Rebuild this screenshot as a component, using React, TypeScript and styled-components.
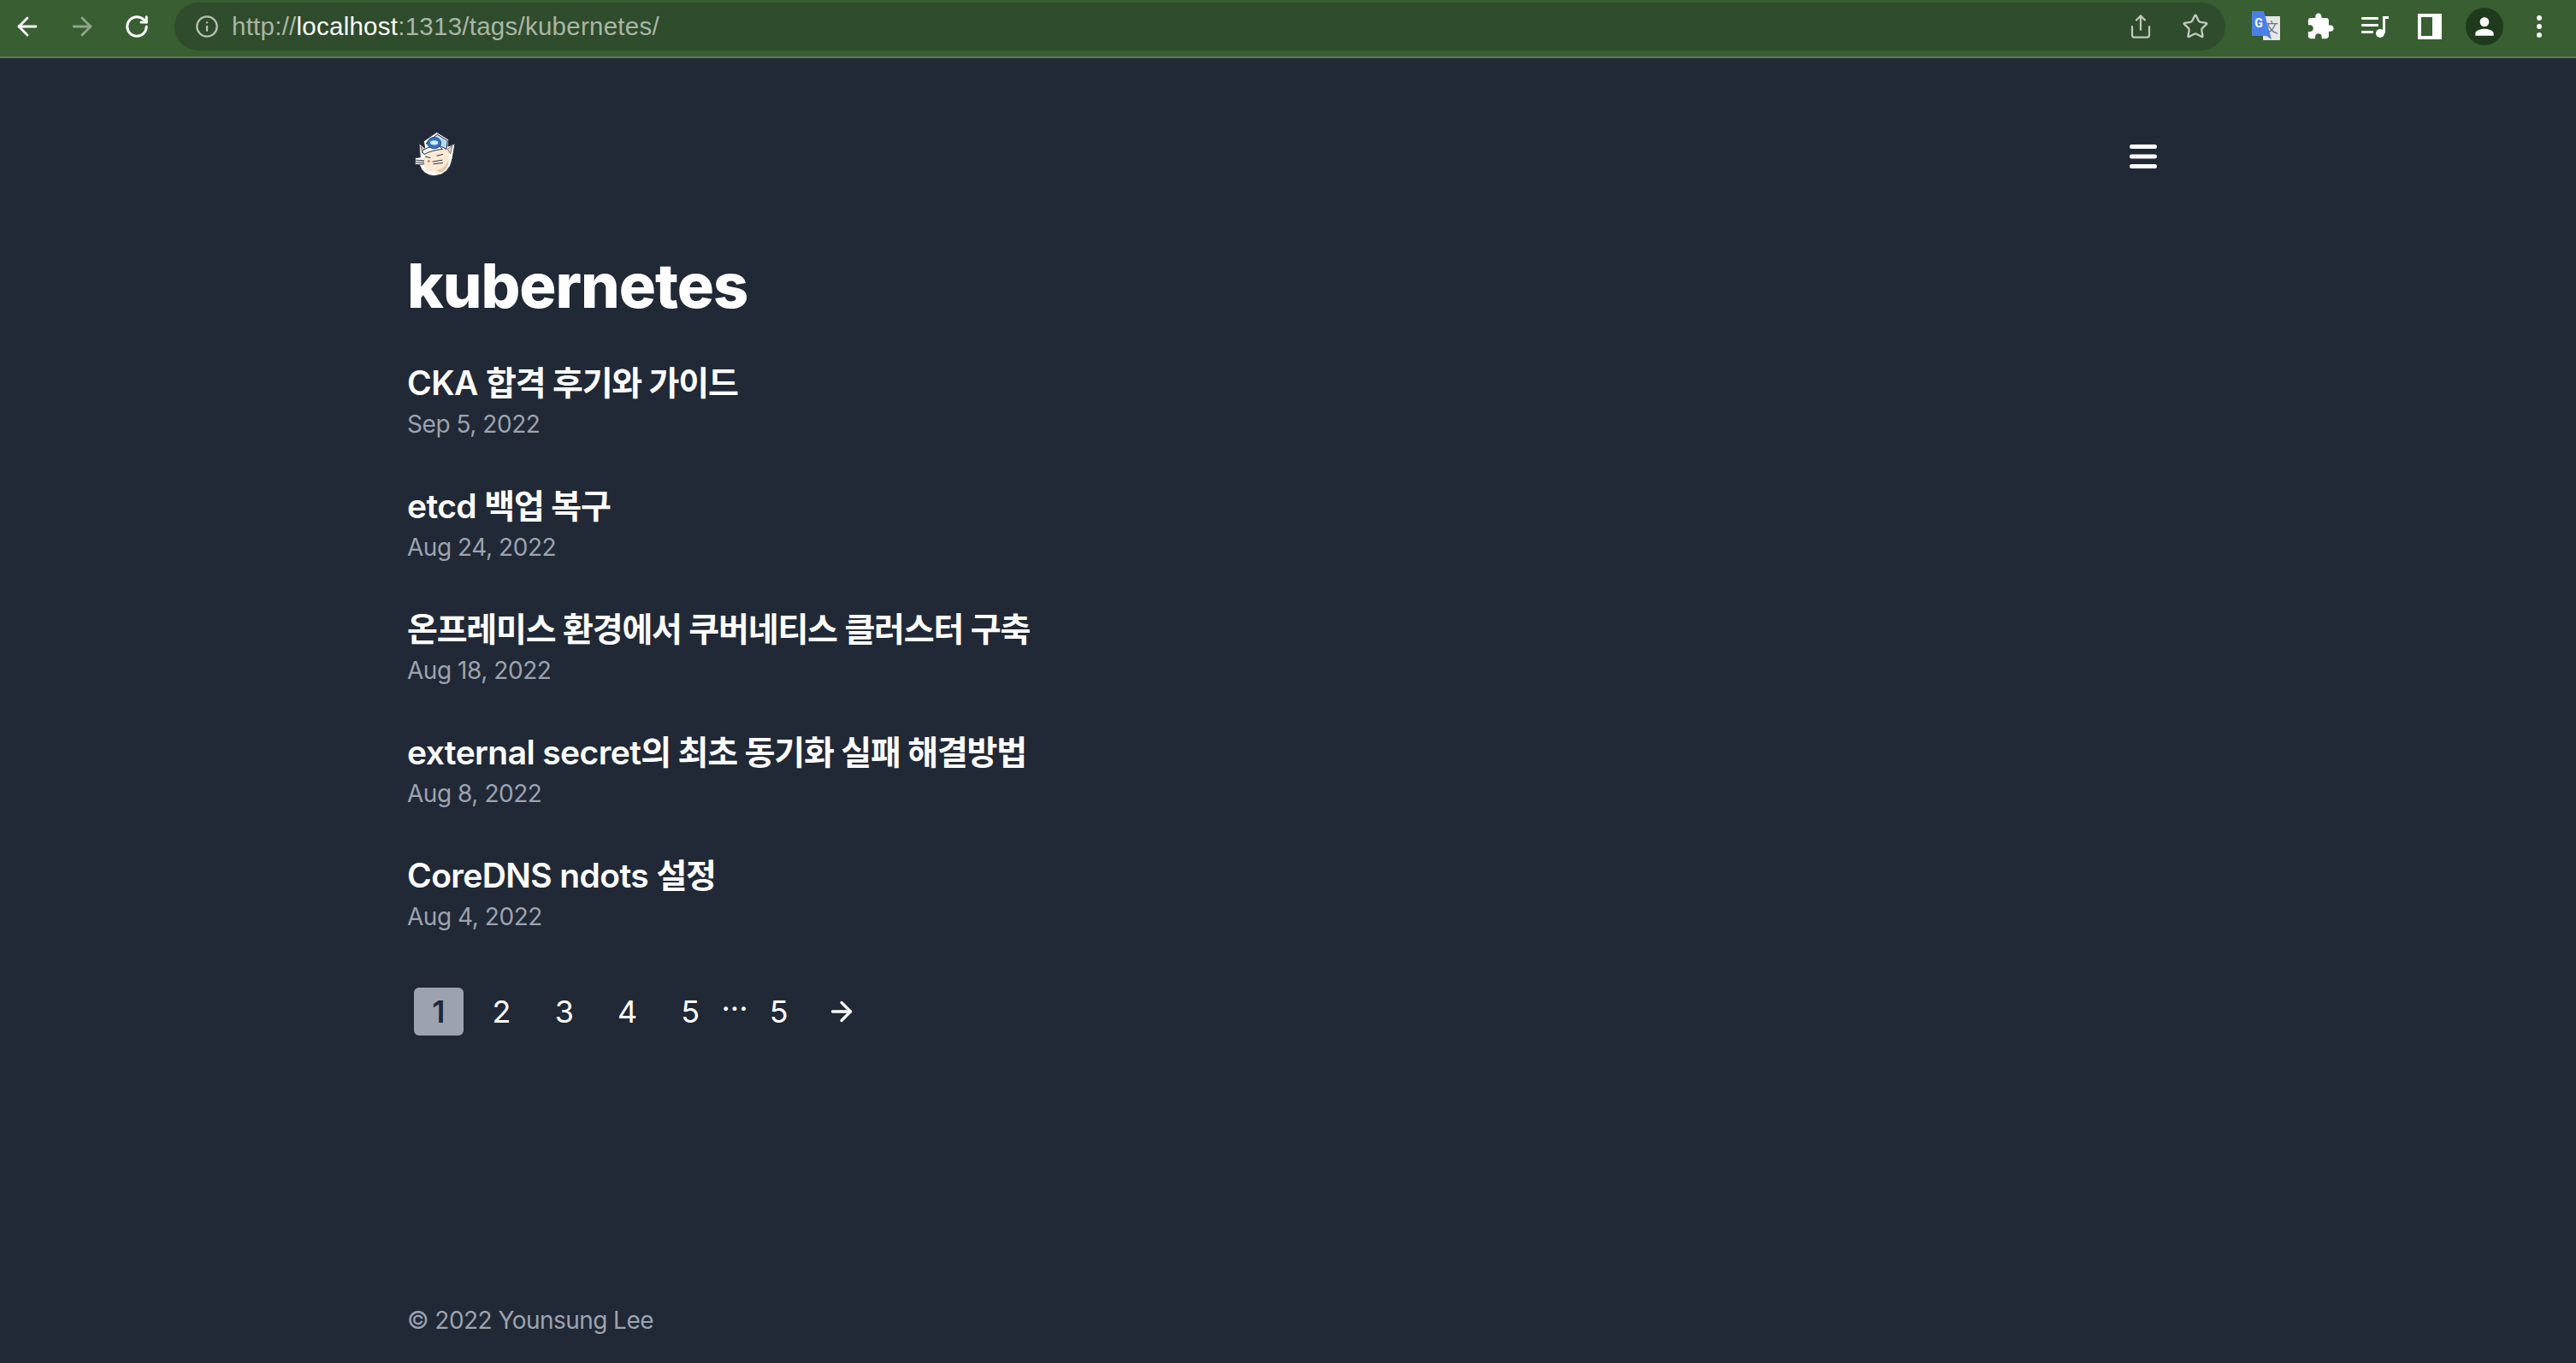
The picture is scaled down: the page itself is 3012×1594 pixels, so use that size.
import React from "react";
import styled, { createGlobalStyle } from "styled-components";
import { ArrowLeft, ArrowRight, RotateCw, Info, Share, Star } from "lucide-react";

const Global = createGlobalStyle`
  html, body { margin: 0; padding: 0; background: #212936; }
  body { font-family: Inter, "Noto Sans CJK KR", sans-serif; -webkit-font-smoothing: antialiased; }
  * { box-sizing: border-box; }
`;

const Page = styled.div`
  display: flex;
  flex-direction: column;
  height: 1594px;
  overflow: hidden;
  background: #212936;
  color: #fff;
`;

const Toolbar = styled.header`
  display: flex;
  align-items: center;
  flex: none;
  height: 68px;
  padding: 0 11px 4px 0;
  background: #385e31;
  border-bottom: 2px solid #5b7c55;
`;

const Slot = styled.div<{ $dim?: boolean }>`
  display: flex;
  align-items: center;
  justify-content: center;
  flex: none;
  width: 64px;
  height: 56px;
  color: ${(p) => (p.$dim ? "#8fa58b" : "#ffffff")};
`;

const Omnibox = styled.div`
  display: flex;
  align-items: center;
  flex: 1;
  height: 56px;
  margin: 0 15px 0 12px;
  padding: 0 3px 0 24px;
  border-radius: 28px;
  background: #2f4c2c;
`;

const InfoSlot = styled.span`
  display: flex;
  width: 43px;
  color: #b6bfb3;
`;

const Url = styled.div`
  flex: 1;
  font-family: "Liberation Sans", Arial, sans-serif;
  font-size: 29.5px;
  letter-spacing: 0.25px;
  color: #a9b6a6;
  b { font-weight: 400; color: #fff; }
`;

const PillIcon = styled(Slot)`
  color: #c1c8be;
`;

const AvatarCircle = styled.div`
  display: flex;
  align-items: center;
  justify-content: center;
  width: 44px;
  height: 44px;
  border-radius: 50%;
  background: #1f3a1c;
`;

const Main = styled.div`
  display: flex;
  flex-direction: column;
  flex: 1;
  width: 2060px;
  margin: 0 auto;
`;

const Nav = styled.nav`
  display: flex;
  align-items: center;
  justify-content: space-between;
  flex: none;
  height: 90px;
  margin-top: 70px;
  padding: 0 14px 0 8px;
`;

const LogoLink = styled.a`
  display: flex;
  margin-bottom: 6px;
`;

const Title = styled.h1`
  margin: 66px 0 0;
  font-size: 72px;
  line-height: 80px;
  font-weight: 800;
  letter-spacing: -1px;
`;

const List = styled.ul`
  display: flex;
  flex-direction: column;
  gap: 48px;
  margin: 46px 0 0;
  padding: 0;
  list-style: none;
`;

const Item = styled.li`
  display: flex;
  flex-direction: column;
  height: 96px;
`;

const ItemTitle = styled.a`
  font-size: 39px;
  line-height: 56px;
  font-weight: 600;
  letter-spacing: -1.2px;
  color: #fff;
`;

const Latin = styled.span`
  letter-spacing: -0.6px;
`;

const ItemDate = styled.time`
  font-size: 28px;
  line-height: 40px;
  letter-spacing: -0.45px;
  color: #9ca3af;
`;

const Pager = styled.div`
  display: flex;
  align-items: center;
  margin-top: 63px;
`;

const PageLink = styled.a<{ $active?: boolean }>`
  display: flex;
  align-items: center;
  justify-content: center;
  width: 57.6px;
  height: 56px;
  margin: 0 8px;
  border-radius: 6px;
  font-size: 36px;
  font-weight: ${(p) => (p.$active ? 600 : 400)};
  color: ${(p) => (p.$active ? "#1f2937" : "#fff")};
  background: ${(p) => (p.$active ? "#9ca3af" : "transparent")};
`;

const Dots = styled.span`
  display: flex;
  justify-content: center;
  width: 30px;
  white-space: nowrap;
  font-size: 36px;
  line-height: 48px;
  margin-top: -8px;
`;

const Footer = styled.footer`
  margin-top: auto;
  padding-bottom: 30px;
  font-size: 28px;
  line-height: 40px;
  letter-spacing: -0.55px;
  color: #9ca3af;
`;

const posts: [string, string, string][] = [
  ["CKA ", "합격 후기와 가이드", "Sep 5, 2022"],
  ["etcd ", "백업 복구", "Aug 24, 2022"],
  ["", "온프레미스 환경에서 쿠버네티스 클러스터 구축", "Aug 18, 2022"],
  ["external secret", "의 최초 동기화 실패 해결방법", "Aug 8, 2022"],
  ["CoreDNS ndots ", "설정", "Aug 4, 2022"],
];

const Logo = () => (
  <svg width="50" height="57" viewBox="70 65 150 170">
    <path d="M88 112 L108 128 L104 104 L150 72 L192 98 L190 122 L214 112 L205 165 Q195 222 140 226 Q100 222 90 188 L74 186 L74 162 L92 160 Z" fill="#fff" stroke="#2a2f3a" strokeWidth="3" strokeLinejoin="round" />
    <path d="M112 146 Q150 120 188 130 Q204 170 180 200 Q150 226 115 205 Q92 175 112 146Z" fill="#f9e9d5" />
    <path d="M150 205 Q175 205 192 170 Q190 205 160 215Z" fill="#eec39a" />
    <path d="M94 122 L108 136 L100 146Z" fill="#f3d8bd" stroke="#333" strokeWidth="2" />
    <path d="M205 118 L188 132 L198 148Z" fill="#f3d8bd" stroke="#333" strokeWidth="2" />
    <path d="M112 112 L152 80 L188 102 L184 132 L165 122Z" fill="#b9d9f2" stroke="#25304a" strokeWidth="3" strokeLinejoin="round" />
    <path d="M98 138 Q125 118 160 122 L170 132 Q130 136 106 150Z" fill="#fff" stroke="#25304a" strokeWidth="3" strokeLinejoin="round" />
    <ellipse cx="141" cy="110" rx="24" ry="20" fill="#2f74c8" stroke="#1f2c4c" strokeWidth="2" />
    <ellipse cx="141" cy="109" rx="14" ry="8" fill="#dbe9f7" />
    <path d="M76 170 L106 172 M76 178 L106 178 M78 186 L106 184" stroke="#30323a" strokeWidth="3" />
    <path d="M135 176 L170 170 M138 184 L172 180" stroke="#30323a" strokeWidth="3" />
    <path d="M110 158 L128 162 M150 155 L172 150" stroke="#30323a" strokeWidth="3" />
    <circle cx="122" cy="174" r="4" fill="#d9686a" />
  </svg>
);

const Hamburger = () => (
  <svg width="32" height="28" viewBox="0 0 32 28">
    <path d="M2.5 2.5 H29.5 M2.5 14 H29.5 M2.5 25.5 H29.5" stroke="#fff" strokeWidth="5" strokeLinecap="round" />
  </svg>
);

const Translate = () => (
  <svg width="34" height="36" viewBox="0 0 34 36">
    <rect x="14" y="6" width="20" height="28" rx="1" fill="#e6e6e6" />
    <text x="24" y="25" textAnchor="middle" fontSize="16" fill="#6e7a85" fontFamily="'Noto Sans CJK SC', sans-serif">文</text>
    <path d="M1 0 H15 L24 33 L18 29 H1 Z" fill="#4a80e8" />
    <text x="9" y="19" textAnchor="middle" fontSize="14" fontWeight="700" fill="#fff" fontFamily="Roboto, sans-serif">G</text>
  </svg>
);

const Puzzle = () => (
  <svg width="34" height="34" viewBox="0 0 24 24" fill="#fff">
    <path d="M20.5 11H19V7c0-1.1-.9-2-2-2h-4V3.5C13 2.12 11.88 1 10.5 1S8 2.12 8 3.5V5H4c-1.1 0-1.99.9-1.99 2v3.8H3.5c1.49 0 2.7 1.21 2.7 2.7s-1.21 2.7-2.7 2.7H2V20c0 1.1.9 2 2 2h3.8v-1.5c0-1.49 1.21-2.7 2.7-2.7 1.49 0 2.7 1.21 2.7 2.7V22H17c1.1 0 2-.9 2-2v-4h1.5c1.38 0 2.5-1.12 2.5-2.5S21.88 11 20.5 11z" />
  </svg>
);

const Playlist = () => (
  <svg width="32" height="28" viewBox="0 0 32 28" fill="#fff">
    <rect x="0" y="3" width="20" height="3" rx="1" />
    <rect x="0" y="11" width="20" height="3" rx="1" />
    <rect x="0" y="19" width="14" height="3" rx="1" />
    <circle cx="22" cy="22" r="5" />
    <path d="M25 22 V2 H32 V5 H28 V22 Z" />
  </svg>
);

const SidePanel = () => (
  <svg width="28" height="30" viewBox="0 0 28 30" fill="#fff">
    <path fillRule="evenodd" d="M0 0 H28 V30 H0 Z M4 4 V26 H17 V4 Z" />
  </svg>
);

const Person = () => (
  <svg width="32" height="32" viewBox="0 0 24 24" fill="#fff">
    <path d="M12 12c2.21 0 4-1.79 4-4s-1.79-4-4-4-4 1.79-4 4 1.79 4 4 4zm0 2c-2.67 0-8 1.34-8 4v2h16v-2c0-2.66-5.33-4-8-4z" />
  </svg>
);

const Kebab = () => (
  <svg width="8" height="28" viewBox="0 0 8 28" fill="#fff">
    <circle cx="4" cy="4" r="3" />
    <circle cx="4" cy="14" r="3" />
    <circle cx="4" cy="24" r="3" />
  </svg>
);

export default function App() {
  return (
    <>
      <Global />
      <Page>
        <Toolbar>
          <Slot><ArrowLeft size={34} strokeWidth={2} /></Slot>
          <Slot $dim><ArrowRight size={34} strokeWidth={2} /></Slot>
          <Slot><RotateCw size={30} strokeWidth={2.4} /></Slot>
          <Omnibox>
            <InfoSlot><Info size={28} strokeWidth={2} /></InfoSlot>
            <Url>http://<b>localhost</b>:1313/tags/kubernetes/</Url>
            <PillIcon><Share size={30} strokeWidth={1.8} /></PillIcon>
            <PillIcon><Star size={32} strokeWidth={1.8} /></PillIcon>
          </Omnibox>
          <Slot><Translate /></Slot>
          <Slot><Puzzle /></Slot>
          <Slot><Playlist /></Slot>
          <Slot><SidePanel /></Slot>
          <Slot><AvatarCircle><Person /></AvatarCircle></Slot>
          <Slot><Kebab /></Slot>
        </Toolbar>
        <Main>
          <Nav>
            <LogoLink><Logo /></LogoLink>
            <Hamburger />
          </Nav>
          <Title>kubernetes</Title>
          <List>
            {posts.map(([latin, korean, date]) => (
              <Item key={date}>
                <ItemTitle><Latin>{latin}</Latin>{korean}</ItemTitle>
                <ItemDate>{date}</ItemDate>
              </Item>
            ))}
          </List>
          <Pager>
            <PageLink $active>1</PageLink>
            <PageLink>2</PageLink>
            <PageLink>3</PageLink>
            <PageLink>4</PageLink>
            <PageLink>5</PageLink>
            <Dots>···</Dots>
            <PageLink>5</PageLink>
            <PageLink><ArrowRight size={36} strokeWidth={2.2} /></PageLink>
          </Pager>
          <Footer>© 2022 Younsung Lee</Footer>
        </Main>
      </Page>
    </>
  );
}
